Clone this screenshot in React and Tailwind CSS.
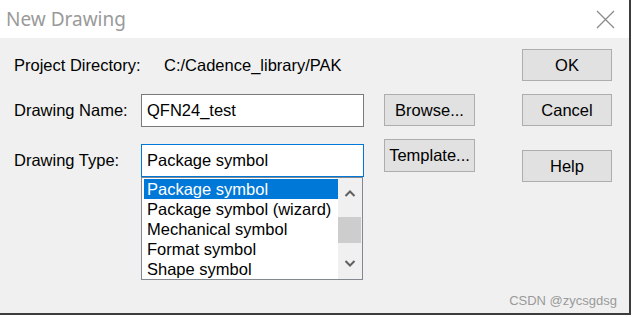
import React from 'react';

const items = ['Package symbol', 'Package symbol (wizard)', 'Mechanical symbol', 'Format symbol', 'Shape symbol'];

const Btn = ({ children, className = '' }) => (
    <div className={`flex items-center justify-center border border-[#adadad] bg-[#e1e1e1] text-[16.5px] text-black ${className}`}>
        {children}
    </div>
);

const App = () => {
    return (
        <div className="w-[633px] h-[317px] bg-white overflow-hidden" style={{ fontFamily: '"Liberation Sans", Arial, sans-serif' }}>
            <div className="w-[631px] h-[315px] border-r-2 border-b-2 border-[#3c3c3c] flex flex-col">
                {/* title bar */}
                <div className="h-[38px] bg-white flex items-center justify-between pl-[6px] pr-[14px]">
                    <span className="text-[19px] text-[#9a9a9a]" style={{ fontFamily: '"Noto Sans", "Open Sans", sans-serif' }}>New Drawing</span>
                    <svg width="19" height="19" viewBox="0 0 19 19" className="mt-[1px]">
                        <path d="M1 1 L18 18 M18 1 L1 18" stroke="#8c8c8c" strokeWidth="1.3" fill="none" />
                    </svg>
                </div>

                {/* body */}
                <div className="flex-1 bg-[#f0f0f0] relative flex">
                    <div className="pl-[14px] pt-[11px] w-[522px] flex flex-col">
                        <div className="h-[33px] flex items-center text-[16.5px] text-black">
                            <span className="w-[150px]">Project Directory:</span>
                            <span>C:/Cadence_library/PAK</span>
                        </div>
                        <div className="mt-[12px] h-[33px] flex items-center">
                            <span className="w-[127px] text-[16.5px] text-black">Drawing Name:</span>
                            <div className="w-[223px] h-[33px] bg-white border border-[#7a7a7a] flex items-center pl-[5px] text-[16.5px]">QFN24_test</div>
                            <Btn className="ml-[20px] w-[91px] h-[32px] -mt-[1px]">Browse...</Btn>
                        </div>
                        <div className="mt-[17px] flex items-start">
                            <span className="w-[127px] h-[33px] flex items-center text-[16.5px] text-black">Drawing Type:</span>
                            <div className="flex flex-col">
                                <div className="w-[223px] h-[33px] bg-white border border-[#0078d7] flex items-center pl-[5px] text-[16.5px]">Package symbol</div>
                                <div className="w-[222px] h-[103px] bg-white border border-[#828790] flex overflow-hidden">
                                    <div className="flex-1 pl-[2px] pt-[1px] flex flex-col text-[16.5px] leading-[20px]">
                                        {items.map((t, i) => (
                                            <div key={t} className={`pl-[3px] h-[20px] shrink-0 ${i === 0 ? 'bg-[#0078d7] text-white' : 'text-black'}`}>{t}</div>
                                        ))}
                                    </div>
                                    <div className="w-[24px] bg-[#f0f0f0] flex flex-col">
                                        <div className="h-[30px] flex items-center justify-center">
                                            <svg width="12" height="8" viewBox="0 0 12 8"><path d="M1.5 7 L6 2.5 L10.5 7" stroke="#606060" strokeWidth="2" fill="none" /></svg>
                                        </div>
                                        <div className="mt-[9px] w-[23px] h-[26px] bg-[#cdcdcd]" />
                                        <div className="flex-1" />
                                        <div className="h-[30px] flex items-center justify-center">
                                            <svg width="12" height="8" viewBox="0 0 12 8"><path d="M1.5 1 L6 5.5 L10.5 1" stroke="#606060" strokeWidth="2" fill="none" /></svg>
                                        </div>
                                    </div>
                                </div>
                            </div>
                            <Btn className="ml-[20px] w-[91px] h-[33px] -mt-[5px]">Template...</Btn>
                        </div>
                    </div>
                    <div className="pt-[11px] flex flex-col">
                        <Btn className="w-[90px] h-[32px]">OK</Btn>
                        <Btn className="mt-[13px] w-[90px] h-[32px]">Cancel</Btn>
                        <Btn className="mt-[24px] w-[90px] h-[32px]">Help</Btn>
                    </div>
                    <span className="absolute right-[12px] bottom-[3px] text-[13px] text-[#9a9a9a]">CSDN @zycsgdsg</span>
                </div>
            </div>
        </div>
    );
};

export default App;
